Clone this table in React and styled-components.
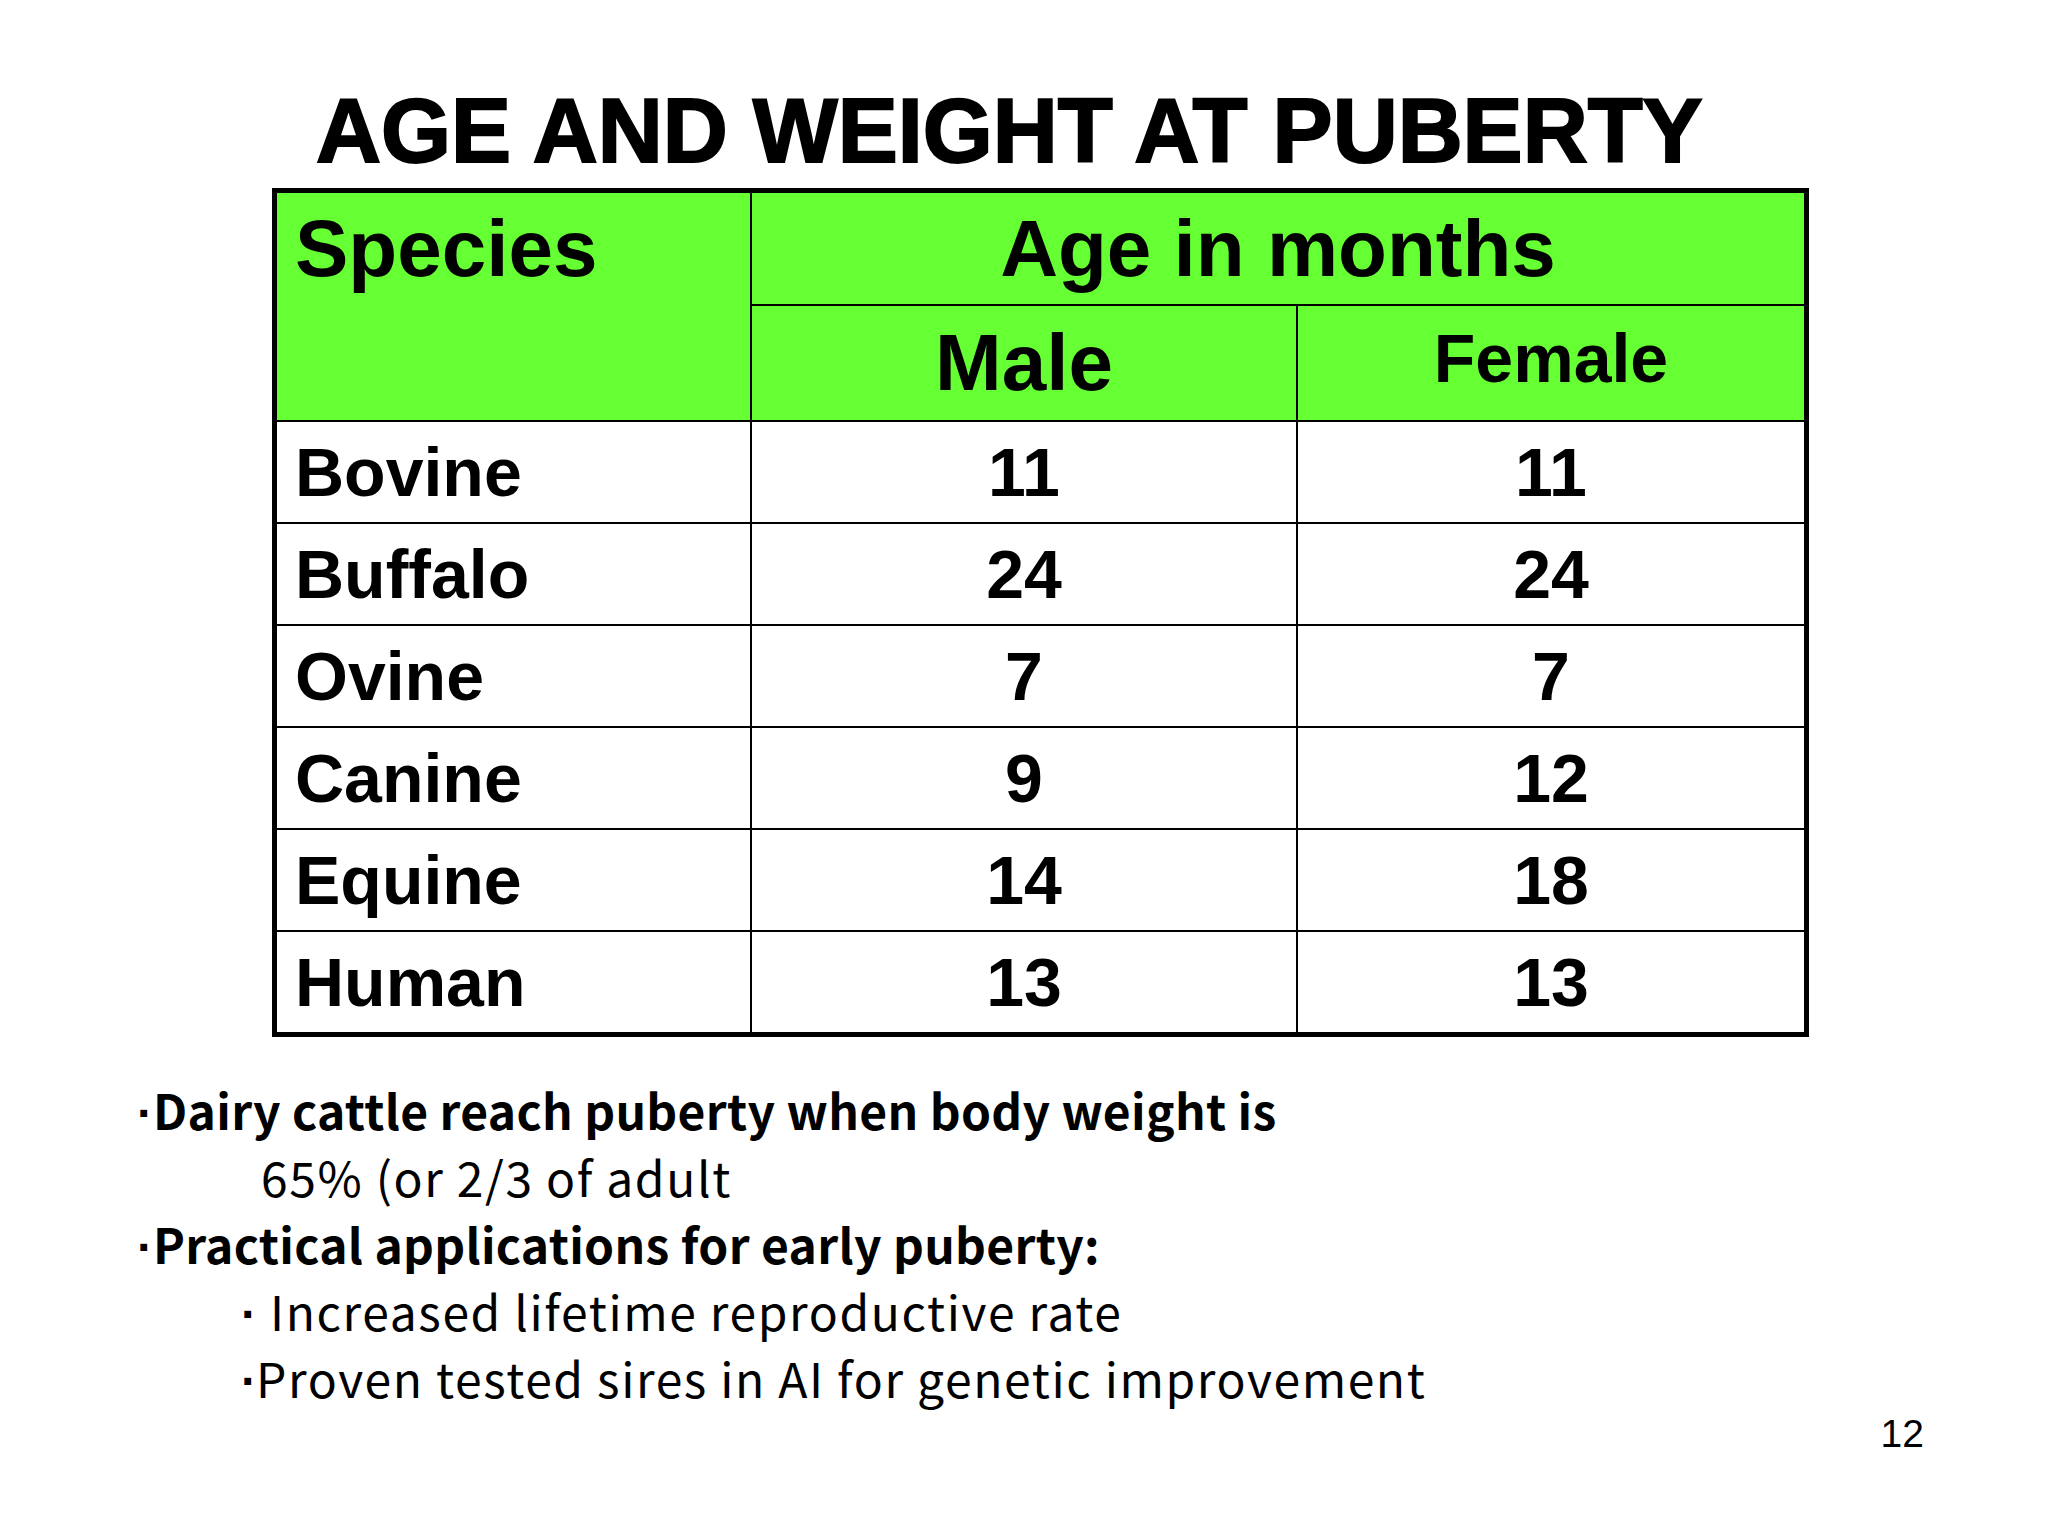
import React from 'react';
import styled, { createGlobalStyle } from 'styled-components';

const GlobalStyle = createGlobalStyle`
	html, body {
		margin: 0;
		padding: 0;
		background: #fff;
	}
`;

const Slide = styled.div`
	width: 2048px;
	height: 1536px;
	box-sizing: border-box;
	padding-top: 86px;
	display: flex;
	flex-direction: column;
	background: #fff;
	color: #000;
	font-family: 'Liberation Sans', Arial, sans-serif;
	overflow: hidden;
`;

const Title = styled.h1`
	margin: 0 0 0 316px;
	font-size: 90px;
	line-height: 1;
	font-weight: 700;
	-webkit-text-stroke: 2px #000;
	white-space: nowrap;
`;

const Table = styled.div`
	margin: 12px 0 0 272px;
	width: 1537px;
	box-sizing: border-box;
	border: 5px solid #000;
	background: #000;
	display: grid;
	grid-template-columns: 473px 544px 506px;
	grid-template-rows: 111px 114px repeat(6, 100px);
	gap: 2px;
`;

const Cell = styled.div`
	background: ${(p) => (p.$head ? '#66ff33' : '#fff')};
	font-weight: 700;
	font-size: ${(p) => p.$size || 68}px;
	line-height: 1;
	display: flex;
	align-items: ${(p) => (p.$top ? 'flex-start' : 'center')};
	justify-content: ${(p) => (p.$left ? 'flex-start' : 'center')};
	padding: ${(p) => (p.$left ? '0 0 0 18px' : '0')};
	padding-top: ${(p) => (p.$top ? '16px' : '0')};
	padding-bottom: ${(p) => p.$lift || 0}px;
	grid-row: ${(p) => p.$row || 'auto'};
	grid-column: ${(p) => p.$col || 'auto'};
	white-space: nowrap;
`;

const Notes = styled.div`
	margin: 39px 0 0 141px;
	font-family: 'Noto Sans CJK JP', 'Liberation Sans', sans-serif;
	font-size: 48px;
	line-height: 67px;
`;

const Line = styled.div`
	height: 67px;
	padding-left: ${(p) => p.$indent || 0}px;
	font-weight: ${(p) => (p.$bold ? 700 : 400)};
	letter-spacing: ${(p) => (p.$bold ? 0.3 : 1.6)}px;
	white-space: nowrap;
`;

const Dot = styled.span`
	display: inline-block;
	width: ${(p) => p.$w || 12}px;
	margin-left: -4px;
	line-height: 0;
	font-family: 'Liberation Sans', Arial, sans-serif;
	font-weight: 700;
	letter-spacing: 0;
`;

const Footer = styled.div`
	margin-top: 3px;
	display: flex;
	justify-content: flex-end;
	padding-right: 124px;
	font-size: 39px;
	line-height: 1;
`;

const rows = [
	['Bovine', '11', '11'],
	['Buffalo', '24', '24'],
	['Ovine', '7', '7'],
	['Canine', '9', '12'],
	['Equine', '14', '18'],
	['Human', '13', '13'],
];

export default function App() {
	return (
		<>
			<GlobalStyle />
			<Slide>
				<Title>AGE AND WEIGHT AT PUBERTY</Title>
				<Table>
					<Cell $head $left $top $size={80} $row="1 / span 2">
						Species
					</Cell>
					<Cell $head $size={80} $col="2 / span 2">
						Age in months
					</Cell>
					<Cell $head $size={80}>
						Male
					</Cell>
					<Cell $head $size={68} $lift={10}>
						Female
					</Cell>
					{rows.map(([name, male, female]) => (
						<React.Fragment key={name}>
							<Cell $left>{name}</Cell>
							<Cell>{male}</Cell>
							<Cell>{female}</Cell>
						</React.Fragment>
					))}
				</Table>
				<Notes>
					<Line $bold>
						<Dot $w={16}>·</Dot>Dairy cattle reach puberty when body weight is
					</Line>
					<Line $indent={120}>65% (or 2/3 of adult</Line>
					<Line $bold>
						<Dot $w={16}>·</Dot>Practical applications for early puberty:
					</Line>
					<Line $indent={104}>
						<Dot $w={29}>·</Dot>Increased lifetime reproductive rate
					</Line>
					<Line $indent={104}>
						<Dot $w={15}>·</Dot>Proven tested sires in AI for genetic improvement
					</Line>
				</Notes>
				<Footer>12</Footer>
			</Slide>
		</>
	);
}
